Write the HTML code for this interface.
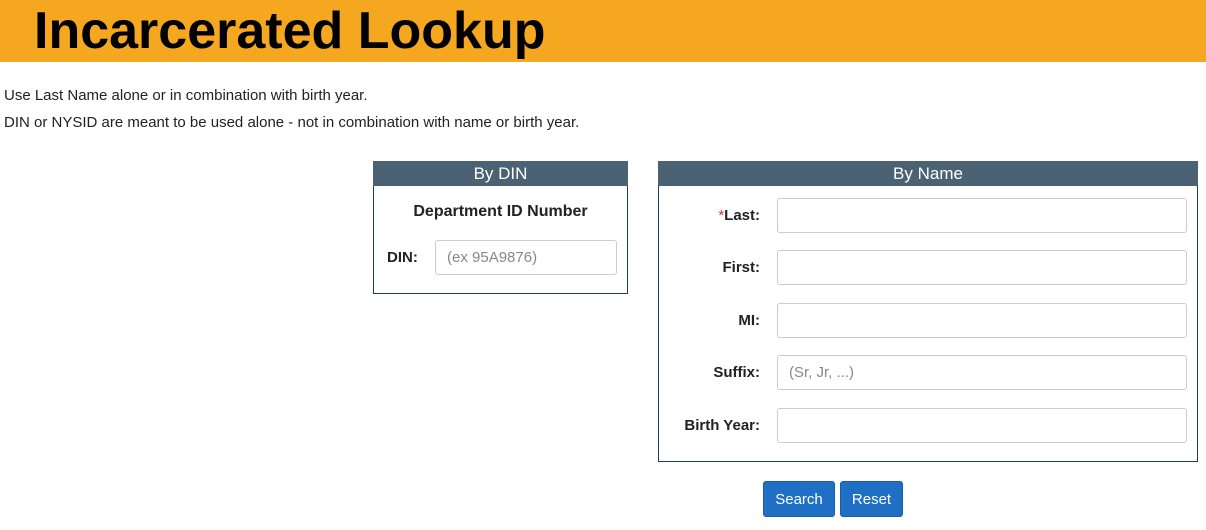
<!DOCTYPE html>
<html><head><style>
body{margin:0;width:1206px;height:530px;background:#fff;font-family:"Liberation Sans",Arial,sans-serif;position:relative;overflow:hidden;color:#222}
.hdr{position:absolute;left:0;top:0;width:1206px;height:62px;background:#f5a81f}
.hdr h1{position:absolute;left:34px;top:3px;margin:0;font-size:52px;font-weight:bold;color:#000;line-height:56px}
.p{position:absolute;left:4px;font-size:15px;color:#222}
.box{position:absolute;border:1px solid #1e3d5c;border-top:none;box-sizing:border-box}
.bh{position:absolute;left:-1px;right:-1px;top:0;height:25px;background:#4a6274;color:#fff;font-size:17px;text-align:center;line-height:26px}
.lbl{position:absolute;font-size:15px;font-weight:bold;color:#222;text-align:right}
.inp{position:absolute;border:1px solid #ccc;border-radius:3px;box-sizing:border-box;background:#fff;font-size:15px;color:#888;padding-left:11px;line-height:32px}
.btn{position:absolute;top:481px;height:36px;background:#1f6fc5;border:1px solid #1a5ea8;border-radius:3px;box-sizing:border-box;color:#fff;font-size:15px;text-align:center;line-height:35px}
</style></head><body>
<div class="hdr"><h1>Incarcerated Lookup</h1></div>
<div class="p" style="top:87px">Use Last Name alone or in combination with birth year.</div>
<div class="p" style="top:114px">DIN or NYSID are meant to be used alone - not in combination with name or birth year.</div>

<div class="box" style="left:373px;top:161px;width:255px;height:133px">
<div class="bh">By DIN</div>
<div style="position:absolute;left:0;right:0;top:42px;text-align:center;font-weight:bold;font-size:16px">Department ID Number</div>
</div>
<div class="lbl" style="left:387px;top:249px">DIN:</div>
<div class="inp" style="left:435px;top:240px;width:182px;height:35px;line-height:34px">(ex 95A9876)</div>

<div class="box" style="left:658px;top:161px;width:540px;height:301px">
<div class="bh">By Name</div>
</div>
<div class="lbl" style="left:600px;width:160px;top:207px"><span style="color:#c33;font-weight:normal">*</span>Last:</div>
<div class="inp" style="left:777px;top:198px;width:410px;height:35px"></div>
<div class="lbl" style="left:600px;width:160px;top:259px">First:</div>
<div class="inp" style="left:777px;top:250px;width:410px;height:35px"></div>
<div class="lbl" style="left:600px;width:160px;top:312px">MI:</div>
<div class="inp" style="left:777px;top:303px;width:410px;height:35px"></div>
<div class="lbl" style="left:600px;width:160px;top:364px">Suffix:</div>
<div class="inp" style="left:777px;top:355px;width:410px;height:35px;line-height:34px">(Sr, Jr, ...)</div>
<div class="lbl" style="left:600px;width:160px;top:417px">Birth Year:</div>
<div class="inp" style="left:777px;top:408px;width:410px;height:35px"></div>

<div class="btn" style="left:763px;width:72px">Search</div>
<div class="btn" style="left:840px;width:63px">Reset</div>
</body></html>
